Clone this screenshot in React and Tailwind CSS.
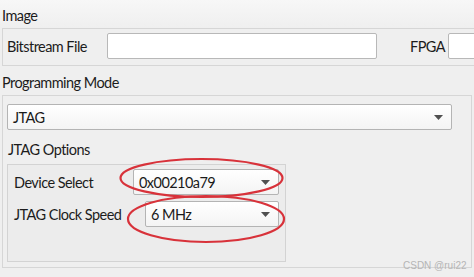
import React from 'react';

const font = { fontFamily: 'Lato, "Noto Sans", sans-serif', letterSpacing: '-0.55px' };

const Arrow = () => (
  <svg width="9" height="5" viewBox="0 0 9 5" className="shrink-0">
    <path d="M0 0 L9 0 L4.5 5 Z" fill="#505050" />
  </svg>
);

const Combo = ({ value, className }) => (
  <div
    className={`flex items-center justify-between h-[26px] pl-[5px] pr-[8px] border border-[#b4b4b4] rounded-[2px] bg-gradient-to-b from-white to-[#f4f4f4] text-[14.5px] text-[#1a1a1a] ${className}`}
  >
    <span className="pt-[1px]">{value}</span>
    <Arrow />
  </div>
);

const App = () => {
  return (
    <div
      className="relative w-[474px] h-[277px] overflow-hidden bg-[#efefef] text-[#1c1c1c]"
      style={font}
    >
      <div className="h-[28px] flex items-center pl-[2px] pt-[3px] text-[14.5px] bg-gradient-to-b from-[#f7f7f7] to-[#efefef]">
        Image
      </div>

      <div className="ml-[2px] w-[540px] h-[38px] border border-[#d6d6d6] flex items-start pt-[4px] pl-[4px]">
        <span className="w-[100px] h-[26px] flex items-center pt-[1px] text-[14.5px]">Bitstream File</span>
        <div className="w-[270px] h-[26px] bg-white border border-[#b8b8b8] rounded-[2px]" />
        <span className="ml-[33px] w-[38px] h-[26px] flex items-center pt-[1px] text-[14.5px]">FPGA</span>
        <div className="w-[90px] h-[26px] bg-white border border-[#b8b8b8] rounded-[2px]" />
      </div>

      <div className="h-[29px] flex items-center pl-[2px] pt-[4px] text-[14.5px]">Programming Mode</div>

      <div className="ml-[2px] w-[470px] h-[173px] border border-[#d6d6d6] pl-[4px] pt-[8px]">
        <Combo value="JTAG" className="w-[445px]" />
        <div className="h-[34px] flex items-center pl-[1px] pt-[6px] text-[14.5px]">JTAG Options</div>
        <div className="w-[279px] h-[98px] border border-[#d3d3d3] bg-[#ececec] pt-[4px] pl-[6px] pr-[6px] flex flex-col gap-[6px]">
          <div className="flex items-center justify-between">
            <span className="text-[14.5px] pt-[1px]">Device Select</span>
            <Combo value="0x00210a79" className="w-[146px]" />
          </div>
          <div className="flex items-center justify-between">
            <span className="text-[14.5px] pt-[1px]">JTAG Clock Speed</span>
            <Combo value="6 MHz" className="w-[134px]" />
          </div>
        </div>
      </div>

      <svg className="absolute left-0 top-0 pointer-events-none" width="474" height="277">
        <ellipse cx="201.5" cy="178" rx="81" ry="19" fill="none" stroke="#d8323a" strokeWidth="2.2" />
        <ellipse cx="206" cy="219" rx="78" ry="23" fill="none" stroke="#d8323a" strokeWidth="2.2" />
      </svg>

      <span className="absolute left-[403px] top-[258px] text-[10px] text-[#b5b5b5] tracking-normal" style={{ fontFamily: '"Liberation Sans", sans-serif' }}>
        CSDN @rui22
      </span>
    </div>
  );
};

export default App;
